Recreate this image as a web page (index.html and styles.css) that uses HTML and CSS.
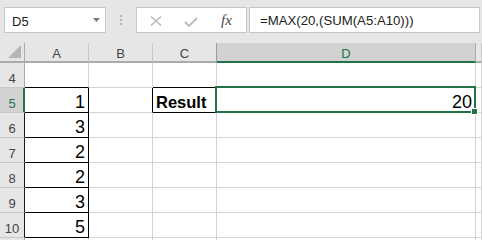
FILE: index.html
```html
<!DOCTYPE html>
<html>
<head>
<meta charset="utf-8">
<link rel="stylesheet" href="styles.css">
</head>
<body>
<div class="toolbar">
  <div class="namebox">
    <span class="name">D5</span>
    <svg class="dd" width="7" height="4" viewBox="0 0 7 4"><path d="M0 0H7L3.5 4Z" fill="#7a7a7a"/></svg>
  </div>
  <div class="grip">
    <svg width="2" height="10" viewBox="0 0 2 10"><rect x="0" y="0" width="2" height="2" fill="#b4b4b4"/><rect x="0" y="4" width="2" height="2" fill="#b4b4b4"/><rect x="0" y="8" width="2" height="2" fill="#b4b4b4"/></svg>
  </div>
  <div class="fxbox">
    <svg class="ic-x" width="12" height="10" viewBox="0 0 12 10"><path d="M1 0.5L11 9.5M11 0.5L1 9.5" stroke="#bdbdbd" stroke-width="1.6" fill="none"/></svg>
    <svg class="ic-ok" width="14" height="10" viewBox="0 0 14 10"><path d="M1 5L5 9L13 1" stroke="#bdbdbd" stroke-width="2" fill="none"/></svg>
    <span class="fx">fx</span>
  </div>
  <div class="formula">=MAX(20,(SUM(A5:A10)))</div>
</div>
<div class="sheet">
  <div class="row head">
    <div class="cell corner"><svg width="24" height="18" viewBox="0 0 24 18"><path d="M21 2V15H8Z" fill="#b5b5b5"/></svg></div>
    <div class="cell hc ca">A</div>
    <div class="cell hc cb">B</div>
    <div class="cell hc cc hc-prev">C</div>
    <div class="cell hc cd hc-sel">D</div>
    <div class="cell hc ce"></div>
  </div>
  <div class="row">
    <div class="cell rh">4</div>
    <div class="cell ca bb"></div>
    <div class="cell cb"></div>
    <div class="cell cc bb"></div>
    <div class="cell cd"></div>
    <div class="cell ce"></div>
  </div>
  <div class="row">
    <div class="cell rh rh-sel">5</div>
    <div class="cell ca num bb br">1</div>
    <div class="cell cb br"></div>
    <div class="cell cc bb br label">Result</div>
    <div class="cell cd num">20</div>
    <div class="cell ce"></div>
  </div>
  <div class="row">
    <div class="cell rh brd">6</div>
    <div class="cell ca num bb br">3</div>
    <div class="cell cb"></div>
    <div class="cell cc"></div>
    <div class="cell cd"></div>
    <div class="cell ce"></div>
  </div>
  <div class="row">
    <div class="cell rh brd">7</div>
    <div class="cell ca num bb br">2</div>
    <div class="cell cb"></div>
    <div class="cell cc"></div>
    <div class="cell cd"></div>
    <div class="cell ce"></div>
  </div>
  <div class="row">
    <div class="cell rh brd">8</div>
    <div class="cell ca num bb br">2</div>
    <div class="cell cb"></div>
    <div class="cell cc"></div>
    <div class="cell cd"></div>
    <div class="cell ce"></div>
  </div>
  <div class="row">
    <div class="cell rh brd">9</div>
    <div class="cell ca num bb br">3</div>
    <div class="cell cb"></div>
    <div class="cell cc"></div>
    <div class="cell cd"></div>
    <div class="cell ce"></div>
  </div>
  <div class="row">
    <div class="cell rh brd">10</div>
    <div class="cell ca num bb br">5</div>
    <div class="cell cb"></div>
    <div class="cell cc"></div>
    <div class="cell cd"></div>
    <div class="cell ce"></div>
  </div>
  <div class="row stub">
    <div class="cell rh"></div>
    <div class="cell ca"></div>
    <div class="cell cb"></div>
    <div class="cell cc"></div>
    <div class="cell cd"></div>
    <div class="cell ce"></div>
  </div>
  <div class="sel"><div class="handle"></div></div>
</div>
</body>
</html>
```

FILE: styles.css
```css
html, body {
  margin: 0;
  padding: 0;
  background: #ffffff;
}
body {
  width: 482px;
  height: 240px;
  overflow: hidden;
  font-family: "Liberation Sans", Arial, sans-serif;
}
.toolbar {
  box-sizing: border-box;
  height: 43px;
  background: #e6e6e6;
  display: flex;
  align-items: flex-start;
  padding: 7px 0 0 4px;
}
.namebox {
  box-sizing: border-box;
  width: 102px;
  height: 26px;
  background: #ffffff;
  border: 1px solid #c6c6c6;
  display: flex;
  align-items: center;
  justify-content: space-between;
  padding: 2px 5px 0 7px;
}
.name {
  font-size: 13px;
  color: #222222;
}
.dd {
  margin-top: -2px;
}
.grip {
  width: 30px;
  height: 26px;
  display: flex;
  justify-content: center;
  align-items: flex-start;
  padding-top: 8px;
  box-sizing: border-box;
}
.fxbox {
  box-sizing: border-box;
  width: 111px;
  height: 26px;
  background: #ffffff;
  border: 1px solid #c6c6c6;
  display: flex;
  align-items: center;
}
.ic-x {
  margin-left: 13px;
  margin-top: 2px;
}
.ic-ok {
  margin-left: 22px;
  margin-top: 4px;
}
.fx {
  margin-left: 23px;
  font-family: "Liberation Serif", "Times New Roman", serif;
  font-style: italic;
  font-size: 15px;
  color: #4a4a4a;
  margin-top: 1px;
}
.formula {
  box-sizing: border-box;
  width: 231px;
  height: 26px;
  margin-left: 2px;
  background: #ffffff;
  border: 1px solid #c6c6c6;
  font-size: 13.2px;
  color: #222222;
  padding: 5px 0 0 10px;
  line-height: 15px;
  white-space: nowrap;
}
.sheet {
  position: relative;
}
.row {
  display: flex;
  height: 25px;
}
.row.head {
  height: 20px;
}
.row.stub {
  height: 2px;
}
.cell {
  box-sizing: border-box;
  border-right: 1px solid #d4d4d4;
  border-bottom: 1px solid #d4d4d4;
  display: flex;
  align-items: flex-end;
  flex: none;
}
.stub .cell {
  border-bottom: 0;
}
.corner {
  width: 25px;
  background: #e6e6e6;
  border-right-color: #ababab;
  border-bottom: 2px solid #ababab;
  align-items: flex-start;
}
.hc {
  background: #e6e6e6;
  border-right-color: #c8c8c8;
  border-bottom: 2px solid #ababab;
  justify-content: center;
  padding-bottom: 1px;
  font-size: 13px;
  line-height: 13px;
  color: #444444;
}
.hc-prev {
  border-right-color: #9b9b9b;
}
.hc-sel {
  background: #d2d2d2;
  border-bottom-color: #217346;
  border-right-color: #ababab;
  color: #217346;
}
.ca, .cb, .cc {
  width: 64px;
}
.cd {
  width: 259px;
}
.ce {
  flex: 1;
}
.rh {
  width: 25px;
  background: #e6e6e6;
  border-right-color: #ababab;
  border-bottom-color: #c8c8c8;
  justify-content: center;
  font-size: 13px;
  line-height: 13px;
  color: #444444;
  padding-bottom: 2px;
}
.rh-sel {
  background: #d2d2d2;
  color: #217346;
  border-right: 1px solid #217346;
  box-shadow: inset -1px 0 0 #217346;
}
.brd {
  border-right-color: #1a1a1a;
}
.bb {
  border-bottom-color: #000000;
}
.br {
  border-right-color: #000000;
}
.num {
  justify-content: flex-end;
  padding-right: 3px;
  padding-bottom: 1px;
  font-size: 18px;
  line-height: 18px;
  color: #000000;
}
.label {
  justify-content: flex-start;
  padding-left: 3px;
  padding-bottom: 1px;
  font-size: 16.5px;
  line-height: 18px;
  font-weight: bold;
  color: #000000;
}
.sel {
  position: absolute;
  left: 215px;
  top: 43px;
  width: 261px;
  height: 27px;
  box-sizing: border-box;
  border: 2px solid #217346;
}
.handle {
  position: absolute;
  right: -4px;
  bottom: -4px;
  width: 7px;
  height: 7px;
  box-sizing: border-box;
  background: #217346;
  border: 1px solid #ffffff;
}
```
